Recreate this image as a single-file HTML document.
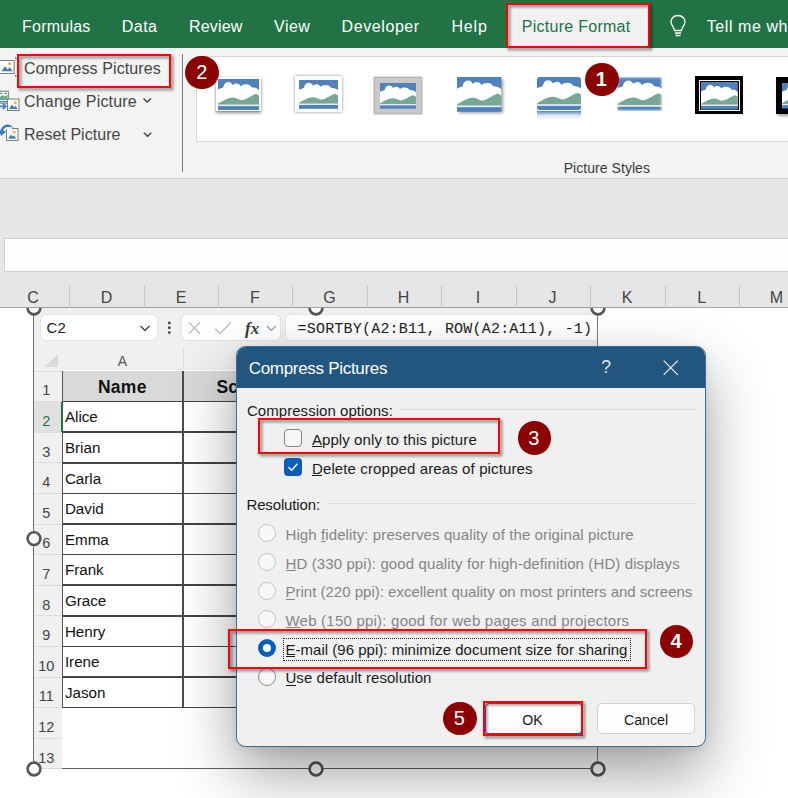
<!DOCTYPE html>
<html><head><meta charset="utf-8"><title>Compress Pictures</title>
<style>
html,body{margin:0;padding:0;background:#fff}
#app{position:relative;width:788px;height:798px;overflow:hidden;background:#fff;font-family:'Liberation Sans', sans-serif}
.abs{position:absolute;box-sizing:content-box}
.t{position:absolute;white-space:nowrap;margin:0;padding:0}
.red{border:2px solid #f00;border-style:solid;border-color:#ff0000;filter:drop-shadow(2px 2px 1.5px rgba(0,0,0,.55))}
</style></head><body>
<div id="app">
<!-- tab bar -->
<div class="abs" style="left:0;top:0;width:788px;height:48px;background:#217346"></div>
<div class="abs" style="left:506px;top:4px;width:143px;height:44px;background:#f1f1f1"></div>
<!-- ribbon -->
<div class="abs" style="left:0;top:48px;width:788px;height:130px;background:#f3f3f3;border-bottom:1px solid #d2d2d2"></div>
<div class="abs" style="left:182px;top:54px;width:1px;height:118px;background:#7c7c7c"></div>
<div class="abs" style="left:196px;top:56px;width:600px;height:84px;background:#fff;border:1px solid #d6d6d6"></div>
<div class="abs" style="left:215.5px;top:76.8px;width:45.7px;height:34.5px;background:#fff;box-shadow:0 2px 3px rgba(0,0,0,.45),0 0 1px rgba(0,0,0,.3)"></div><svg class="abs" style="left:217.8px;top:78.9px;overflow:visible;" width="41" height="31" viewBox="0 0 41 31"><rect width="41" height="31" fill="#4f81bd"/><path d="M0 10.54 C2.05 9.29 4.10 9.29 5.33 8.37 C6.14 2.48 12.29 1.24 14.76 6.2 C17.22 3.71 21.32 4.03 22.55 7.43 C25.41 4.34 31.98 4.64 33.62 8.37 C36.9 8.37 39.36 9.29 41 11.16 L41 27.90 L0 27.90 Z" fill="#fff"/><path d="M0 24.8 C4.92 21.7 10.25 18.59 14.76 18.59 C18.86 18.59 21.32 21.7 24.59 21.08 C29.52 19.84 34.44 15.5 38.13 14.87 L41 16.74 L41 25.73 L0 25.73 Z" fill="#76a797"/><rect y="25.73" width="41" height="1.39" fill="#e4ece6"/><rect y="27.12" width="41" height="3.87" fill="#4f81bd"/></svg><div class="abs" style="left:294.5px;top:76.4px;width:47px;height:35.6px;background:#fff;box-shadow:0 0 3px rgba(0,0,0,.45)"></div><svg class="abs" style="left:298.9px;top:80.2px;overflow:visible;" width="39" height="28.6" viewBox="0 0 39 28.6"><rect width="39" height="28.6" fill="#4f81bd"/><path d="M0 9.72 C1.95 8.58 3.90 8.58 5.07 7.72 C5.85 2.28 11.7 1.14 14.04 5.72 C16.38 3.43 20.28 3.71 21.45 6.86 C24.18 4.00 30.42 4.29 31.97 7.72 C35.1 7.72 37.44 8.58 39 10.29 L39 25.74 L0 25.74 Z" fill="#fff"/><path d="M0 22.88 C4.68 20.02 9.75 17.16 14.04 17.16 C17.94 17.16 20.28 20.02 23.4 19.44 C28.08 18.30 32.76 14.3 36.27 13.72 L39 15.44 L39 23.73 L0 23.73 Z" fill="#76a797"/><rect y="23.73" width="39" height="1.28" fill="#e4ece6"/><rect y="25.02" width="39" height="3.57" fill="#4f81bd"/></svg><div class="abs" style="left:374px;top:77px;width:48px;height:37px;background:#c9c9c9;box-shadow:0 0 2px rgba(0,0,0,.4), inset 0 0 0 1px #b5b5b5"></div><svg class="abs" style="left:380px;top:82.5px;overflow:visible;" width="36" height="25.5" viewBox="0 0 36 25.5"><rect width="36" height="25.5" fill="#4f81bd"/><path d="M0 8.67 C1.8 7.64 3.6 7.64 4.68 6.88 C5.39 2.04 10.79 1.02 12.95 5.10 C15.12 3.06 18.72 3.31 19.8 6.12 C22.32 3.57 28.08 3.82 29.52 6.88 C32.4 6.88 34.56 7.64 36 9.18 L36 22.95 L0 22.95 Z" fill="#fff"/><path d="M0 20.40 C4.32 17.84 9.0 15.29 12.95 15.29 C16.56 15.29 18.72 17.84 21.59 17.34 C25.91 16.32 30.24 12.75 33.48 12.24 L36 13.77 L36 21.16 L0 21.16 Z" fill="#76a797"/><rect y="21.16" width="36" height="1.14" fill="#e4ece6"/><rect y="22.31" width="36" height="3.18" fill="#4f81bd"/></svg><div class="abs" style="left:456.9px;top:76.5px;width:44.3px;height:34.5px;box-shadow:2px 2px 3px rgba(0,0,0,.4)"></div><svg class="abs" style="left:456.9px;top:76.5px;overflow:visible;" width="44.3" height="34.5" viewBox="0 0 44.3 34.5"><rect width="44.3" height="34.5" fill="#4f81bd"/><path d="M0 11.73 C2.21 10.35 4.43 10.35 5.75 9.31 C6.64 2.76 13.29 1.38 15.94 6.9 C18.60 4.14 23.03 4.48 24.36 8.28 C27.46 4.83 34.55 5.17 36.32 9.31 C39.87 9.31 42.52 10.35 44.3 12.42 L44.3 31.05 L0 31.05 Z" fill="#fff"/><path d="M0 27.6 C5.31 24.15 11.07 20.7 15.94 20.7 C20.37 20.7 23.03 24.15 26.58 23.46 C31.89 22.08 37.21 17.25 41.19 16.56 L44.3 18.63 L44.3 28.63 L0 28.63 Z" fill="#76a797"/><rect y="28.63" width="44.3" height="1.55" fill="#e4ece6"/><rect y="30.18" width="44.3" height="4.31" fill="#4f81bd"/></svg><svg class="abs" style="left:536.5px;top:76.7px;overflow:visible;border-radius:3px;overflow:hidden;" width="44.3" height="33" viewBox="0 0 44.3 33"><rect width="44.3" height="33" fill="#4f81bd"/><path d="M0 11.22 C2.21 9.9 4.43 9.9 5.75 8.91 C6.64 2.64 13.29 1.32 15.94 6.60 C18.60 3.96 23.03 4.29 24.36 7.92 C27.46 4.62 34.55 4.95 36.32 8.91 C39.87 8.91 42.52 9.9 44.3 11.87 L44.3 29.7 L0 29.7 Z" fill="#fff"/><path d="M0 26.40 C5.31 23.09 11.07 19.8 15.94 19.8 C20.37 19.8 23.03 23.09 26.58 22.44 C31.89 21.12 37.21 16.5 41.19 15.84 L44.3 17.82 L44.3 27.38 L0 27.38 Z" fill="#76a797"/><rect y="27.38" width="44.3" height="1.48" fill="#e4ece6"/><rect y="28.87" width="44.3" height="4.12" fill="#4f81bd"/></svg><div class="abs" style="left:536.5px;top:110.5px;width:44.3px;height:9px;background:linear-gradient(#4f81bd 0,#9db8da 25%,rgba(200,215,235,.6) 50%,rgba(255,255,255,0) 100%);border-radius:0 0 3px 3px"></div><svg class="abs" style="left:616.7px;top:77px;overflow:visible;filter:blur(0.5px);" width="45.3" height="34" viewBox="0 0 45.3 34"><rect width="45.3" height="34" fill="#4f81bd"/><path d="M0 11.56 C2.26 10.2 4.53 10.2 5.88 9.18 C6.79 2.72 13.58 1.36 16.30 6.80 C19.02 4.08 23.55 4.42 24.91 8.16 C28.08 4.76 35.33 5.1 37.14 9.18 C40.76 9.18 43.48 10.2 45.3 12.24 L45.3 30.6 L0 30.6 Z" fill="#fff"/><path d="M0 27.20 C5.43 23.79 11.32 20.4 16.30 20.4 C20.83 20.4 23.55 23.79 27.17 23.12 C32.61 21.76 38.05 17.0 42.12 16.32 L45.3 18.36 L45.3 28.22 L0 28.22 Z" fill="#76a797"/><rect y="28.22" width="45.3" height="1.53" fill="#e4ece6"/><rect y="29.75" width="45.3" height="4.25" fill="#4f81bd"/></svg><div class="abs" style="left:615.7px;top:76px;width:47.3px;height:36px;box-shadow:inset 0 0 2.5px 1.5px #fff"></div><div class="abs" style="left:695px;top:76.2px;width:48.2px;height:38.2px;background:#000"></div><div class="abs" style="left:699px;top:80.2px;width:38.6px;height:28.6px;border:0.8px solid #fff"></div><svg class="abs" style="left:701.2px;top:81.6px;overflow:visible;" width="36.8" height="27.4" viewBox="0 0 36.8 27.4"><rect width="36.8" height="27.4" fill="#4f81bd"/><path d="M0 9.31 C1.83 8.21 3.67 8.21 4.78 7.39 C5.52 2.19 11.04 1.09 13.24 5.48 C15.45 3.28 19.13 3.56 20.24 6.57 C22.81 3.83 28.70 4.10 30.17 7.39 C33.12 7.39 35.32 8.21 36.8 9.86 L36.8 24.66 L0 24.66 Z" fill="#fff"/><path d="M0 21.92 C4.41 19.17 9.2 16.43 13.24 16.43 C16.92 16.43 19.13 19.17 22.08 18.63 C26.49 17.53 30.91 13.7 34.22 13.15 L36.8 14.79 L36.8 22.74 L0 22.74 Z" fill="#76a797"/><rect y="22.74" width="36.8" height="1.23" fill="#e4ece6"/><rect y="23.97" width="36.8" height="3.42" fill="#4f81bd"/></svg><div class="abs" style="left:775.5px;top:76.7px;width:48px;height:37.3px;background:#000;box-shadow:2px 2px 3px rgba(0,0,0,.4)"></div><svg class="abs" style="left:781.5px;top:82.7px;overflow:visible;" width="36" height="25.3" viewBox="0 0 36 25.3"><rect width="36" height="25.3" fill="#4f81bd"/><path d="M0 8.60 C1.8 7.59 3.6 7.59 4.68 6.83 C5.39 2.02 10.79 1.01 12.95 5.06 C15.12 3.03 18.72 3.28 19.8 6.07 C22.32 3.54 28.08 3.79 29.52 6.83 C32.4 6.83 34.56 7.59 36 9.10 L36 22.77 L0 22.77 Z" fill="#fff"/><path d="M0 20.24 C4.32 17.71 9.0 15.18 12.95 15.18 C16.56 15.18 18.72 17.71 21.59 17.20 C25.91 16.19 30.24 12.65 33.48 12.14 L36 13.66 L36 20.99 L0 20.99 Z" fill="#76a797"/><rect y="20.99" width="36" height="1.13" fill="#e4ece6"/><rect y="22.13" width="36" height="3.16" fill="#4f81bd"/></svg>
<!-- ribbon icons -->
<svg class="abs" style="left:0;top:56px" width="22" height="96" viewBox="0 0 22 96">
 <g fill="none">
 <rect x="-1.5" y="4.5" width="15.7" height="13" fill="#fdfdfd" stroke="#7d7d7d"/>
 <path d="M1.5 15.2 L5 10.3 L7.6 13.4 L9.6 11.3 L12.8 15.2Z" fill="#3f7fc1"/><circle cx="9.6" cy="7.7" r="1.6" fill="#e8b25c"/>
 <path d="M15.3 0.6 L16.9 2.6 L15.3 3.8Z M15.3 18.2 L16.9 19.6 L15.3 21.6Z" fill="#2f6fc0"/>
 <rect x="-3" y="35.2" width="11.4" height="12" fill="#fdfdfd" stroke="#7d7d7d"/>
 <path d="M-2 42.5 L2 39.3 L4.5 40.6 L7.5 38.8 L7.5 44 L-2 44Z" fill="#69a78a"/>
 <path d="M0 37.3 L2 37.3 M5 37.3 L7 37.3 M0 45.6 L7.5 45.6" stroke="#3f7fc1" stroke-width="1.2"/>
 <rect x="7.5" y="43" width="11.5" height="11.5" fill="#fdfdfd" stroke="#7d7d7d"/>
 <path d="M9 53 L12 48.5 L14 51.2 L15.4 49.8 L17.6 53Z" fill="#3f7fc1"/><circle cx="15.4" cy="46.4" r="1.5" fill="#e8b25c"/>
 <path d="M0 50.3 L5.6 50.3 M2.8 47.6 L5.8 50.3 L2.8 53" stroke="#3f7fc1" stroke-width="1.7"/>
 <path d="M1.6 77 C2 69 10 67.50 12.30 73.50" stroke="#3b7bbf" stroke-width="2.4"/><path d="M-1.8 73.2 L1.2 80 L6.3 75.6Z" fill="#3b7bbf"/>
 <rect x="6.5" y="72.5" width="11.5" height="12" fill="#fdfdfd" stroke="#7d7d7d"/>
 <path d="M6 72 L12 72" stroke="#f3f3f3" stroke-width="2"/>
 <path d="M8.3 82.70 L11 78.50 L12.60 80.60 L14 79.20 L16.20 82.70Z" fill="#3f7fc1"/><circle cx="14.2" cy="76" r="1.6" fill="#e8b25c"/>
 </g>
</svg>
<svg class="abs" style="left:142px;top:96px" width="12" height="50" viewBox="0 0 12 50"><path d="M1.5 2.6 L5.2 6.1 L9 2.6 M1.8 36.8 L5.5 40.3 L9.3 36.8" fill="none" stroke="#444" stroke-width="1.4"/></svg>
<!-- bulb -->
<svg class="abs" style="left:667.2px;top:12px" width="22" height="28" viewBox="0 0 22 28"><path d="M11 3.5 C6.5 3.5 4 6.8 4 10 C4 13.5 7.2 15 7.5 18.5 L14.5 18.5 C14.8 15 18 13.5 18 10 C18 6.8 15.5 3.5 11 3.5Z M8 21 L14 21 M8.5 23.5 L13.5 23.5" fill="none" stroke="#fff" stroke-width="1.3"/></svg>
<!-- gray zone + formula bar -->
<div class="abs" style="left:0;top:179px;width:788px;height:129px;background:#e6e6e6"></div>
<div class="abs" style="left:3.5px;top:237.8px;width:800px;height:32px;background:#fdfdfd;border:1px solid #cfcfcf"></div>
<div class="abs" style="left:0;top:307.3px;width:788px;height:1.2px;background:#a0a0a0"></div>
<div class="abs" style="left:69.0px;top:286px;width:1px;height:22px;background:#c6c6c6"></div><div class="abs" style="left:143.5px;top:286px;width:1px;height:22px;background:#c6c6c6"></div><div class="abs" style="left:217.5px;top:286px;width:1px;height:22px;background:#c6c6c6"></div><div class="abs" style="left:292.0px;top:286px;width:1px;height:22px;background:#c6c6c6"></div><div class="abs" style="left:366.5px;top:286px;width:1px;height:22px;background:#c6c6c6"></div><div class="abs" style="left:440.5px;top:286px;width:1px;height:22px;background:#c6c6c6"></div><div class="abs" style="left:515.5px;top:286px;width:1px;height:22px;background:#c6c6c6"></div><div class="abs" style="left:590.0px;top:286px;width:1px;height:22px;background:#c6c6c6"></div><div class="abs" style="left:664.5px;top:286px;width:1px;height:22px;background:#c6c6c6"></div><div class="abs" style="left:738.5px;top:286px;width:1px;height:22px;background:#c6c6c6"></div>
<span class="t" style="left:22.00px;top:18.96px;font-family:'Liberation Sans', sans-serif;font-size:16px;line-height:16px;color:#fff;font-weight:400;letter-spacing:0.23px;">Formulas</span>
<span class="t" style="left:121.80px;top:18.96px;font-family:'Liberation Sans', sans-serif;font-size:16px;line-height:16px;color:#fff;font-weight:400;letter-spacing:0.45px;">Data</span>
<span class="t" style="left:189.00px;top:18.96px;font-family:'Liberation Sans', sans-serif;font-size:16px;line-height:16px;color:#fff;font-weight:400;letter-spacing:0.18px;">Review</span>
<span class="t" style="left:274.00px;top:18.96px;font-family:'Liberation Sans', sans-serif;font-size:16px;line-height:16px;color:#fff;font-weight:400;letter-spacing:0.50px;">View</span>
<span class="t" style="left:341.60px;top:18.96px;font-family:'Liberation Sans', sans-serif;font-size:16px;line-height:16px;color:#fff;font-weight:400;letter-spacing:0.58px;">Developer</span>
<span class="t" style="left:451.50px;top:18.96px;font-family:'Liberation Sans', sans-serif;font-size:16px;line-height:16px;color:#fff;font-weight:400;letter-spacing:0.79px;">Help</span>
<span class="t" style="left:521.80px;top:18.96px;font-family:'Liberation Sans', sans-serif;font-size:16px;line-height:16px;color:#217346;font-weight:400;letter-spacing:0.27px;">Picture Format</span>
<span class="t" style="left:706.80px;top:18.96px;font-family:'Liberation Sans', sans-serif;font-size:16px;line-height:16px;color:#fff;font-weight:400;letter-spacing:0.57px;">Tell me what you want to do</span>
<span class="t" style="left:24.00px;top:60.66px;font-family:'Liberation Sans', sans-serif;font-size:16px;line-height:16px;color:#444;font-weight:400;letter-spacing:0.10px;">Compress Pictures</span>
<span class="t" style="left:24.00px;top:94.46px;font-family:'Liberation Sans', sans-serif;font-size:16px;line-height:16px;color:#444;font-weight:400;letter-spacing:0.19px;">Change Picture</span>
<span class="t" style="left:24.00px;top:127.46px;font-family:'Liberation Sans', sans-serif;font-size:16px;line-height:16px;color:#444;font-weight:400;letter-spacing:0.03px;">Reset Picture</span>
<span class="t" style="left:563.70px;top:160.95px;font-family:'Liberation Sans', sans-serif;font-size:14px;line-height:14px;color:#3a3a3a;font-weight:400;letter-spacing:0.05px;">Picture Styles</span>
<span class="t" style="left:27.22px;top:290.06px;font-family:'Liberation Sans', sans-serif;font-size:16px;line-height:16px;color:#444;font-weight:400;">C</span>
<span class="t" style="left:100.72px;top:290.06px;font-family:'Liberation Sans', sans-serif;font-size:16px;line-height:16px;color:#444;font-weight:400;">D</span>
<span class="t" style="left:175.66px;top:290.06px;font-family:'Liberation Sans', sans-serif;font-size:16px;line-height:16px;color:#444;font-weight:400;">E</span>
<span class="t" style="left:250.11px;top:290.06px;font-family:'Liberation Sans', sans-serif;font-size:16px;line-height:16px;color:#444;font-weight:400;">F</span>
<span class="t" style="left:323.27px;top:290.06px;font-family:'Liberation Sans', sans-serif;font-size:16px;line-height:16px;color:#444;font-weight:400;">G</span>
<span class="t" style="left:397.72px;top:290.06px;font-family:'Liberation Sans', sans-serif;font-size:16px;line-height:16px;color:#444;font-weight:400;">H</span>
<span class="t" style="left:475.77px;top:290.06px;font-family:'Liberation Sans', sans-serif;font-size:16px;line-height:16px;color:#444;font-weight:400;">I</span>
<span class="t" style="left:548.50px;top:290.06px;font-family:'Liberation Sans', sans-serif;font-size:16px;line-height:16px;color:#444;font-weight:400;">J</span>
<span class="t" style="left:621.66px;top:290.06px;font-family:'Liberation Sans', sans-serif;font-size:16px;line-height:16px;color:#444;font-weight:400;">K</span>
<span class="t" style="left:697.25px;top:290.06px;font-family:'Liberation Sans', sans-serif;font-size:16px;line-height:16px;color:#444;font-weight:400;">L</span>
<span class="t" style="left:769.84px;top:290.06px;font-family:'Liberation Sans', sans-serif;font-size:16px;line-height:16px;color:#444;font-weight:400;">M</span>
<!-- embedded picture -->
<div class="abs" style="left:33px;top:308px;width:565px;height:461px;background:#fff;border-left:1px solid #707070;border-right:1px solid #808080;border-bottom:1px solid #606060;box-sizing:border-box"></div>
<div class="abs" style="left:34px;top:308px;width:563px;height:62.4px;background:#f0f0f0"></div>
<div class="abs" style="left:182.5px;top:347px;width:1px;height:23px;background:#dedede"></div>
<div class="abs" style="left:34px;top:370px;width:28px;height:398px;background:#f0f0f0"></div>
<div class="abs" style="left:40.8px;top:315px;width:116.5px;height:25px;background:#fff;border-radius:5px;box-shadow:0 0 0 1px #e4e4e4"></div>
<div class="abs" style="left:182px;top:315px;width:98px;height:25px;background:#fff;border-radius:5px;box-shadow:0 0 0 1px #e4e4e4"></div>
<div class="abs" style="left:286px;top:315px;width:320px;height:25px;background:#fff;border-radius:5px 0 0 5px;box-shadow:0 0 0 1px #e4e4e4;clip-path:inset(-2px 9.5px -2px -2px)"></div>
<svg class="abs" style="left:136px;top:318px" width="150" height="20" viewBox="0 0 150 20">
 <path d="M4.5 8 L9 12.5 L13.5 8" fill="none" stroke="#444" stroke-width="1.3"/>
 <circle cx="33.3" cy="5" r="1.45" fill="#4a4a4a"/><circle cx="33.3" cy="9.8" r="1.45" fill="#4a4a4a"/><circle cx="33.3" cy="14.6" r="1.45" fill="#4a4a4a"/>
 <path d="M53 4.5 L64 15.5 M64 4.5 L53 15.5" stroke="#b9b9b9" stroke-width="1.2" fill="none"/>
 <path d="M79 11 L84 15.5 L95 4.5" stroke="#b9b9b9" stroke-width="1.2" fill="none"/>
 <path d="M131 8 L135.3 12.5 L139.8 8" fill="none" stroke="#999" stroke-width="1.1"/>
</svg>
<div class="abs" style="left:62px;top:371px;width:121px;height:30.6px;background:#d9d9d9"></div>
<div class="abs" style="left:183px;top:371px;width:420px;height:30.6px;background:#d9d9d9"></div>
<svg class="abs" style="left:42px;top:353px" width="18" height="16" viewBox="0 0 18 16"><path d="M16 1 L16 14 L2 14Z" fill="#dadada"/></svg>
<div class="abs" style="left:34px;top:401.6px;width:27.5px;height:30.6px;background:#e0e0e0"></div>
<div class="abs" style="left:34px;top:370.5px;width:28px;height:1px;background:#dcdcdc"></div><div class="abs" style="left:62px;top:400.8px;width:540px;height:1.6px;background:#444"></div><div class="abs" style="left:34px;top:401.1px;width:28px;height:1px;background:#dcdcdc"></div><div class="abs" style="left:62px;top:431.4px;width:540px;height:1.6px;background:#444"></div><div class="abs" style="left:34px;top:431.7px;width:28px;height:1px;background:#dcdcdc"></div><div class="abs" style="left:62px;top:462.0px;width:540px;height:1.6px;background:#444"></div><div class="abs" style="left:34px;top:462.3px;width:28px;height:1px;background:#dcdcdc"></div><div class="abs" style="left:62px;top:492.6px;width:540px;height:1.6px;background:#444"></div><div class="abs" style="left:34px;top:492.9px;width:28px;height:1px;background:#dcdcdc"></div><div class="abs" style="left:62px;top:523.2px;width:540px;height:1.6px;background:#444"></div><div class="abs" style="left:34px;top:523.5px;width:28px;height:1px;background:#dcdcdc"></div><div class="abs" style="left:62px;top:553.8px;width:540px;height:1.6px;background:#444"></div><div class="abs" style="left:34px;top:554.1px;width:28px;height:1px;background:#dcdcdc"></div><div class="abs" style="left:62px;top:584.4px;width:540px;height:1.6px;background:#444"></div><div class="abs" style="left:34px;top:584.7px;width:28px;height:1px;background:#dcdcdc"></div><div class="abs" style="left:62px;top:615.0px;width:540px;height:1.6px;background:#444"></div><div class="abs" style="left:34px;top:615.3px;width:28px;height:1px;background:#dcdcdc"></div><div class="abs" style="left:62px;top:645.6px;width:540px;height:1.6px;background:#444"></div><div class="abs" style="left:34px;top:645.9px;width:28px;height:1px;background:#dcdcdc"></div><div class="abs" style="left:62px;top:676.2px;width:540px;height:1.6px;background:#444"></div><div class="abs" style="left:34px;top:676.5px;width:28px;height:1px;background:#dcdcdc"></div><div class="abs" style="left:62px;top:706.8px;width:540px;height:1.6px;background:#444"></div><div class="abs" style="left:34px;top:707.1px;width:28px;height:1px;background:#dcdcdc"></div><div class="abs" style="left:34px;top:737.7px;width:28px;height:1px;background:#dcdcdc"></div><div class="abs" style="left:34px;top:768.3px;width:28px;height:1px;background:#dcdcdc"></div>
<div class="abs" style="left:61.5px;top:371px;width:1px;height:337.4px;background:#555"></div>
<div class="abs" style="left:182.2px;top:371px;width:1.7px;height:337.4px;background:#4c4c4c"></div>
<div class="abs" style="left:61px;top:401.6px;width:2px;height:30.6px;background:#1e7145"></div>
<span class="t" style="left:46.60px;top:320.30px;font-family:'Liberation Sans', sans-serif;font-size:15px;line-height:15px;color:#222;font-weight:400;">C2</span>
<span class="t" style="left:297.50px;top:322.00px;font-family:'Liberation Mono', monospace;font-size:15px;line-height:15px;color:#222;font-weight:400;letter-spacing:0.21px;">=SORTBY(A2:B11, ROW(A2:A11), -1)</span>
<span class="t" style="left:245.00px;top:319.83px;font-family:'Liberation Serif', serif;font-size:17px;line-height:17px;color:#3a3a3a;font-weight:700;font-style:italic;">fx</span>
<span class="t" style="left:117.63px;top:353.65px;font-family:'Liberation Sans', sans-serif;font-size:14px;line-height:14px;color:#555;font-weight:400;">A</span>
<span class="t" style="left:97.90px;top:379.29px;font-family:'Liberation Sans', sans-serif;font-size:17.5px;line-height:17.5px;color:#111;font-weight:700;letter-spacing:0.28px;">Name</span>
<span class="t" style="left:216.50px;top:379.29px;font-family:'Liberation Sans', sans-serif;font-size:17.5px;line-height:17.5px;color:#111;font-weight:700;">Score</span>
<span class="t" style="left:42.26px;top:383.33px;font-family:'Liberation Sans', sans-serif;font-size:14.5px;line-height:14.5px;color:#444;font-weight:400;">1</span>
<span class="t" style="left:42.26px;top:413.93px;font-family:'Liberation Sans', sans-serif;font-size:14.5px;line-height:14.5px;color:#217346;font-weight:400;">2</span>
<span class="t" style="left:42.26px;top:444.53px;font-family:'Liberation Sans', sans-serif;font-size:14.5px;line-height:14.5px;color:#444;font-weight:400;">3</span>
<span class="t" style="left:42.26px;top:475.13px;font-family:'Liberation Sans', sans-serif;font-size:14.5px;line-height:14.5px;color:#444;font-weight:400;">4</span>
<span class="t" style="left:42.26px;top:505.73px;font-family:'Liberation Sans', sans-serif;font-size:14.5px;line-height:14.5px;color:#444;font-weight:400;">5</span>
<span class="t" style="left:42.26px;top:536.33px;font-family:'Liberation Sans', sans-serif;font-size:14.5px;line-height:14.5px;color:#444;font-weight:400;">6</span>
<span class="t" style="left:42.26px;top:566.93px;font-family:'Liberation Sans', sans-serif;font-size:14.5px;line-height:14.5px;color:#444;font-weight:400;">7</span>
<span class="t" style="left:42.26px;top:597.53px;font-family:'Liberation Sans', sans-serif;font-size:14.5px;line-height:14.5px;color:#444;font-weight:400;">8</span>
<span class="t" style="left:42.26px;top:628.13px;font-family:'Liberation Sans', sans-serif;font-size:14.5px;line-height:14.5px;color:#444;font-weight:400;">9</span>
<span class="t" style="left:38.23px;top:658.73px;font-family:'Liberation Sans', sans-serif;font-size:14.5px;line-height:14.5px;color:#444;font-weight:400;">10</span>
<span class="t" style="left:38.77px;top:689.33px;font-family:'Liberation Sans', sans-serif;font-size:14.5px;line-height:14.5px;color:#444;font-weight:400;">11</span>
<span class="t" style="left:38.23px;top:719.93px;font-family:'Liberation Sans', sans-serif;font-size:14.5px;line-height:14.5px;color:#444;font-weight:400;">12</span>
<span class="t" style="left:38.23px;top:750.53px;font-family:'Liberation Sans', sans-serif;font-size:14.5px;line-height:14.5px;color:#444;font-weight:400;">13</span>
<span class="t" style="left:64.90px;top:409.43px;font-family:'Liberation Sans', sans-serif;font-size:15.2px;line-height:15.2px;color:#111;font-weight:400;">Alice</span>
<span class="t" style="left:64.90px;top:440.03px;font-family:'Liberation Sans', sans-serif;font-size:15.2px;line-height:15.2px;color:#111;font-weight:400;">Brian</span>
<span class="t" style="left:64.90px;top:470.63px;font-family:'Liberation Sans', sans-serif;font-size:15.2px;line-height:15.2px;color:#111;font-weight:400;">Carla</span>
<span class="t" style="left:64.90px;top:501.23px;font-family:'Liberation Sans', sans-serif;font-size:15.2px;line-height:15.2px;color:#111;font-weight:400;">David</span>
<span class="t" style="left:64.90px;top:531.83px;font-family:'Liberation Sans', sans-serif;font-size:15.2px;line-height:15.2px;color:#111;font-weight:400;">Emma</span>
<span class="t" style="left:64.90px;top:562.43px;font-family:'Liberation Sans', sans-serif;font-size:15.2px;line-height:15.2px;color:#111;font-weight:400;">Frank</span>
<span class="t" style="left:64.90px;top:593.03px;font-family:'Liberation Sans', sans-serif;font-size:15.2px;line-height:15.2px;color:#111;font-weight:400;">Grace</span>
<span class="t" style="left:64.90px;top:623.63px;font-family:'Liberation Sans', sans-serif;font-size:15.2px;line-height:15.2px;color:#111;font-weight:400;">Henry</span>
<span class="t" style="left:64.90px;top:654.23px;font-family:'Liberation Sans', sans-serif;font-size:15.2px;line-height:15.2px;color:#111;font-weight:400;">Irene</span>
<span class="t" style="left:64.90px;top:684.83px;font-family:'Liberation Sans', sans-serif;font-size:15.2px;line-height:15.2px;color:#111;font-weight:400;">Jason</span>
<svg class="abs" style="left:0;top:308px" width="620" height="12" viewBox="0 308 620 12"><g fill="#fff" stroke="#555" stroke-width="2.6"><circle cx="34" cy="308" r="6.4"/><circle cx="316" cy="308" r="6.4"/><circle cx="598" cy="308" r="6.4"/></g></svg>
<!-- selection handles -->
<svg class="abs" style="left:0;top:296px" width="620" height="490" viewBox="0 0 620 490">
 <g fill="#fff" stroke="#555" stroke-width="2.6">
 <circle cx="34" cy="242.6" r="6.4"/><circle cx="34" cy="473" r="6.4"/><circle cx="316" cy="473" r="6.4"/><circle cx="598" cy="473" r="6.4"/>
 </g>
</svg>
<!-- dialog -->
<div class="abs" style="left:236px;top:345.7px;width:470.2px;height:401.8px;border-radius:9.5px;background:#f0f0f0;border:1.5px solid #3b6c98;box-sizing:border-box;box-shadow:0 26px 60px rgba(0,0,0,.38),0 2px 8px rgba(0,0,0,.08);overflow:hidden">
 <div class="abs" style="left:-2px;top:-2px;width:474px;height:43.7px;background:#22567f"></div>
</div>
<svg class="abs" style="left:660px;top:357px" width="22" height="22" viewBox="0 0 22 22"><path d="M3.7 3.7 L17.8 17.8 M17.8 3.7 L3.7 17.80" stroke="#f2f5f8" stroke-width="1.15"/></svg>
<div class="abs" style="left:400px;top:409px;width:296px;height:1px;background:#dcdcdc"></div>
<div class="abs" style="left:327px;top:502.5px;width:369px;height:1px;background:#dcdcdc"></div>
<div class="abs" style="left:284px;top:429px;width:18px;height:18px;border-radius:4px;background:#f6f6f6;border:1px solid #858585;box-sizing:border-box"></div>
<div class="abs" style="left:284px;top:458px;width:18px;height:18px;border-radius:4px;background:#0a5cbf"></div>
<svg class="abs" style="left:284px;top:458px" width="18" height="18" viewBox="0 0 18 18"><path d="M4.5 9.3 L7.7 12.3 L13.5 5.8" fill="none" stroke="#fff" stroke-width="1.5"/></svg>
<div class="abs" style="left:258px;top:524.3px;width:18px;height:18px;border-radius:50%;background:#f7f7f7;border:1px solid #c4c4c4;box-sizing:border-box"></div><div class="abs" style="left:258px;top:553.0px;width:18px;height:18px;border-radius:50%;background:#f7f7f7;border:1px solid #c4c4c4;box-sizing:border-box"></div><div class="abs" style="left:258px;top:581.7px;width:18px;height:18px;border-radius:50%;background:#f7f7f7;border:1px solid #c4c4c4;box-sizing:border-box"></div><div class="abs" style="left:258px;top:610.3px;width:18px;height:18px;border-radius:50%;background:#f7f7f7;border:1px solid #c4c4c4;box-sizing:border-box"></div><div class="abs" style="left:258px;top:639.0px;width:18px;height:18px;border-radius:50%;background:#0a5cbf;box-sizing:border-box"></div><div class="abs" style="left:263px;top:644.0px;width:8px;height:8px;border-radius:50%;background:#fff"></div><div class="abs" style="left:258px;top:667.7px;width:18px;height:18px;border-radius:50%;background:#f7f7f7;border:1px solid #8a8a8a;box-sizing:border-box"></div>
<div class="abs" style="left:312px;top:446.3px;width:10px;height:1px;background:#1a1a1a"></div><div class="abs" style="left:312px;top:474.8px;width:10px;height:1px;background:#1a1a1a"></div><div class="abs" style="left:321.0px;top:541.4px;width:4.5px;height:1px;background:#858585"></div><div class="abs" style="left:285.5px;top:570.07px;width:10px;height:1px;background:#858585"></div><div class="abs" style="left:285.5px;top:598.76px;width:9px;height:1px;background:#858585"></div><div class="abs" style="left:285.5px;top:627.43px;width:14px;height:1px;background:#858585"></div><div class="abs" style="left:285.5px;top:656.12px;width:9px;height:1px;background:#1a1a1a"></div><div class="abs" style="left:285.5px;top:684.8px;width:10px;height:1px;background:#1a1a1a"></div>
<div class="abs" style="left:283px;top:638px;width:346px;height:21.4px;border:1px dotted #222"></div>
<div class="abs" style="left:485px;top:702.5px;width:97.5px;height:32px;background:#fdfdfd;border-radius:4px;box-sizing:border-box;border:1px solid #2a6fc4;box-shadow:inset -1px -1px 0 #0a5cbf"></div>
<div class="abs" style="left:597px;top:703.3px;width:98px;height:31px;background:#fdfdfd;border-radius:5px;border:1px solid #d0d0d0;box-sizing:border-box"></div>
<span class="t" style="left:248.70px;top:359.61px;font-family:'Liberation Sans', sans-serif;font-size:17px;line-height:17px;color:#fff;font-weight:400;letter-spacing:-0.30px;">Compress Pictures</span>
<span class="t" style="left:601.30px;top:359.19px;font-family:'Liberation Sans', sans-serif;font-size:17.5px;line-height:17.5px;color:#e4ebf2;font-weight:400;">?</span>
<span class="t" style="left:247.00px;top:402.80px;font-family:'Liberation Sans', sans-serif;font-size:15px;line-height:15px;color:#1a1a1a;font-weight:400;letter-spacing:0.04px;">Compression options:</span>
<span class="t" style="left:311.90px;top:432.00px;font-family:'Liberation Sans', sans-serif;font-size:15px;line-height:15px;color:#1a1a1a;font-weight:400;letter-spacing:0.09px;">Apply only to this picture</span>
<span class="t" style="left:312.00px;top:460.50px;font-family:'Liberation Sans', sans-serif;font-size:15px;line-height:15px;color:#1a1a1a;font-weight:400;letter-spacing:0.12px;">Delete cropped areas of pictures</span>
<span class="t" style="left:246.50px;top:496.50px;font-family:'Liberation Sans', sans-serif;font-size:15px;line-height:15px;color:#1a1a1a;font-weight:400;letter-spacing:-0.15px;">Resolution:</span>
<span class="t" style="left:285.50px;top:527.00px;font-family:'Liberation Sans', sans-serif;font-size:15px;line-height:15px;color:#858585;font-weight:400;letter-spacing:0.10px;">High fidelity: preserves quality of the original picture</span>
<span class="t" style="left:285.50px;top:555.68px;font-family:'Liberation Sans', sans-serif;font-size:15px;line-height:15px;color:#858585;font-weight:400;letter-spacing:0.11px;">HD (330 ppi): good quality for high-definition (HD) displays</span>
<span class="t" style="left:285.50px;top:584.36px;font-family:'Liberation Sans', sans-serif;font-size:15px;line-height:15px;color:#858585;font-weight:400;letter-spacing:-0.00px;">Print (220 ppi): excellent quality on most printers and screens</span>
<span class="t" style="left:285.50px;top:613.04px;font-family:'Liberation Sans', sans-serif;font-size:15px;line-height:15px;color:#858585;font-weight:400;letter-spacing:0.22px;">Web (150 ppi): good for web pages and projectors</span>
<span class="t" style="left:285.50px;top:641.72px;font-family:'Liberation Sans', sans-serif;font-size:15px;line-height:15px;color:#1a1a1a;font-weight:400;letter-spacing:0.02px;">E-mail (96 ppi): minimize document size for sharing</span>
<span class="t" style="left:285.50px;top:670.40px;font-family:'Liberation Sans', sans-serif;font-size:15px;line-height:15px;color:#1a1a1a;font-weight:400;letter-spacing:0.04px;">Use default resolution</span>
<span class="t" style="left:522.25px;top:712.68px;font-family:'Liberation Sans', sans-serif;font-size:14.2px;line-height:14.2px;color:#1a1a1a;font-weight:400;">OK</span>
<span class="t" style="left:623.91px;top:712.68px;font-family:'Liberation Sans', sans-serif;font-size:14.2px;line-height:14.2px;color:#1a1a1a;font-weight:400;">Cancel</span>
<!-- annotations -->
<div class="abs red" style="left:505.6px;top:3.4px;width:140.79px;height:40.2px;border-width:2px"></div>
<div class="abs red" style="left:17.3px;top:53.9px;width:150.2px;height:30.1px;border-width:2px"></div>
<div class="abs red" style="left:258px;top:418px;width:237.60px;height:32px;border-width:2px"></div>
<div class="abs red" style="left:228.3px;top:629.4px;width:414.90px;height:35.80px;border-width:2px"></div>
<div class="abs red" style="left:483.3px;top:700.9px;width:96.19px;height:30.70px;border-width:2px"></div>
<div class="abs" style="left:185.29px;top:55.8px;width:33.6px;height:33.6px;border-radius:50%;background:#8b0000"></div><div class="abs" style="left:585.0px;top:62.60px;width:33.6px;height:33.6px;border-radius:50%;background:#8b0000"></div><div class="abs" style="left:517.5px;top:421.05px;width:33.6px;height:33.6px;border-radius:50%;background:#8b0000"></div><div class="abs" style="left:659.6px;top:624.80px;width:33.6px;height:33.6px;border-radius:50%;background:#8b0000"></div><div class="abs" style="left:443.0px;top:701.7px;width:33.6px;height:33.6px;border-radius:50%;background:#8b0000"></div>
<span class="t" style="left:196.14px;top:62.27px;font-family:'Liberation Sans', sans-serif;font-size:20px;line-height:20px;color:#fff;font-weight:400;">2</span>
<span class="t" style="left:595.84px;top:69.07px;font-family:'Liberation Sans', sans-serif;font-size:20px;line-height:20px;color:#fff;font-weight:700;">1</span>
<span class="t" style="left:528.34px;top:427.52px;font-family:'Liberation Sans', sans-serif;font-size:20px;line-height:20px;color:#fff;font-weight:400;">3</span>
<span class="t" style="left:670.44px;top:631.27px;font-family:'Liberation Sans', sans-serif;font-size:20px;line-height:20px;color:#fff;font-weight:700;">4</span>
<span class="t" style="left:453.84px;top:708.17px;font-family:'Liberation Sans', sans-serif;font-size:20px;line-height:20px;color:#fff;font-weight:400;">5</span>
</div>
</body></html>
